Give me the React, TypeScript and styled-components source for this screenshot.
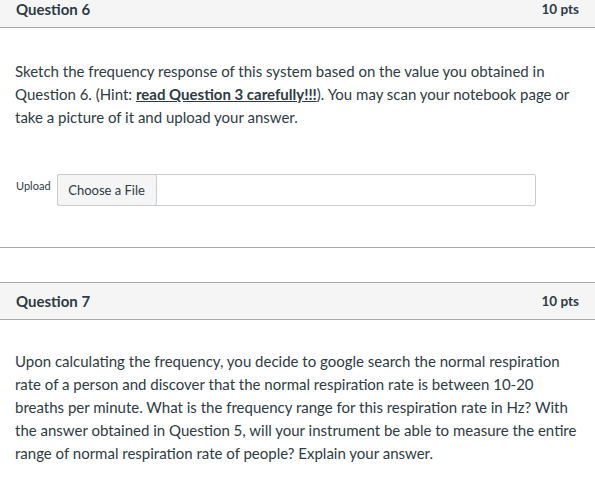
import styled, { createGlobalStyle } from "styled-components";

const Global = createGlobalStyle`
  html, body {
    margin: 0;
    padding: 0;
    background: #fff;
  }
  body {
    font-family: Lato, "Open Sans", "Liberation Sans", sans-serif;
    color: #2d3b45;
  }
`;

const Page = styled.div`
  width: 595px;
  margin-top: -9px;
`;

const Question = styled.section<{ $gap?: number }>`
  margin-top: ${({ $gap }) => $gap ?? 0}px;
`;

const Header = styled.header<{ $top?: boolean }>`
  display: flex;
  align-items: center;
  justify-content: space-between;
  height: 36px;
  padding: 0 16px;
  background: #f5f5f5;
  border-bottom: 1px solid #a8a8a8;
  border-top: ${({ $top }) => ($top ? "1px solid #a8a8a8" : "none")};
`;

const Title = styled.h2`
  margin: 0;
  font-size: 15px;
  font-weight: 700;
`;

const Points = styled.span`
  font-size: 13.5px;
  font-weight: 700;
`;

const Body = styled.div<{ $top: number }>`
  padding: ${({ $top }) => $top}px 10px 0 15px;
`;

const Text = styled.p`
  margin: 0;
  font-size: 15px;
  line-height: 23px;
`;

const Hint = styled.strong`
  text-decoration: underline;
  font-weight: 700;
`;

const UploadRow = styled.div`
  display: flex;
  align-items: flex-start;
  gap: 6px;
  margin-top: 45px;
  padding-left: 1px;
`;

const UploadLabel = styled.span`
  font-size: 11px;
  padding-top: 5px;
`;

const FileField = styled.div`
  display: flex;
  width: 479px;
  height: 32px;
  border: 1px solid #c7cdd1;
  box-sizing: border-box;
  border-radius: 2px;
`;

const FileButton = styled.button`
  width: 100px;
  height: 32px;
  margin: -1px 0 0 -1px;
  background: #f5f5f5;
  border: 1px solid #c7cdd1;
  border-radius: 3px;
  font-family: inherit;
  font-size: 13px;
  color: #2d3b45;
  padding: 0;
`;

const Divider = styled.hr`
  margin: 41px 0 0;
  border: none;
  border-top: 1px solid #a8a8a8;
`;

export default function App() {
  return (
    <Page>
      <Global />
      <Question>
        <Header>
          <Title>Question 6</Title>
          <Points>10 pts</Points>
        </Header>
        <Body $top={32}>
          <Text>
            Sketch the frequency response of this system based on the value you obtained in
            Question 6. (Hint: <Hint>read Question 3 carefully!!!</Hint>). You may scan your
            notebook page or take a picture of it and upload your answer.
          </Text>
          <UploadRow>
            <UploadLabel>Upload</UploadLabel>
            <FileField>
              <FileButton type="button">Choose a File</FileButton>
            </FileField>
          </UploadRow>
        </Body>
        <Divider />
      </Question>
      <Question $gap={34}>
        <Header $top>
          <Title>Question 7</Title>
          <Points>10 pts</Points>
        </Header>
        <Body $top={30}>
          <Text>
            Upon calculating the frequency, you decide to google search the normal respiration
            rate of a person and discover that the normal respiration rate is between 10-20
            breaths per minute. What is the frequency range for this respiration rate in Hz? With
            the answer obtained in Question 5, will your instrument be able to measure the entire
            range of normal respiration rate of people? Explain your answer.
          </Text>
        </Body>
      </Question>
    </Page>
  );
}
